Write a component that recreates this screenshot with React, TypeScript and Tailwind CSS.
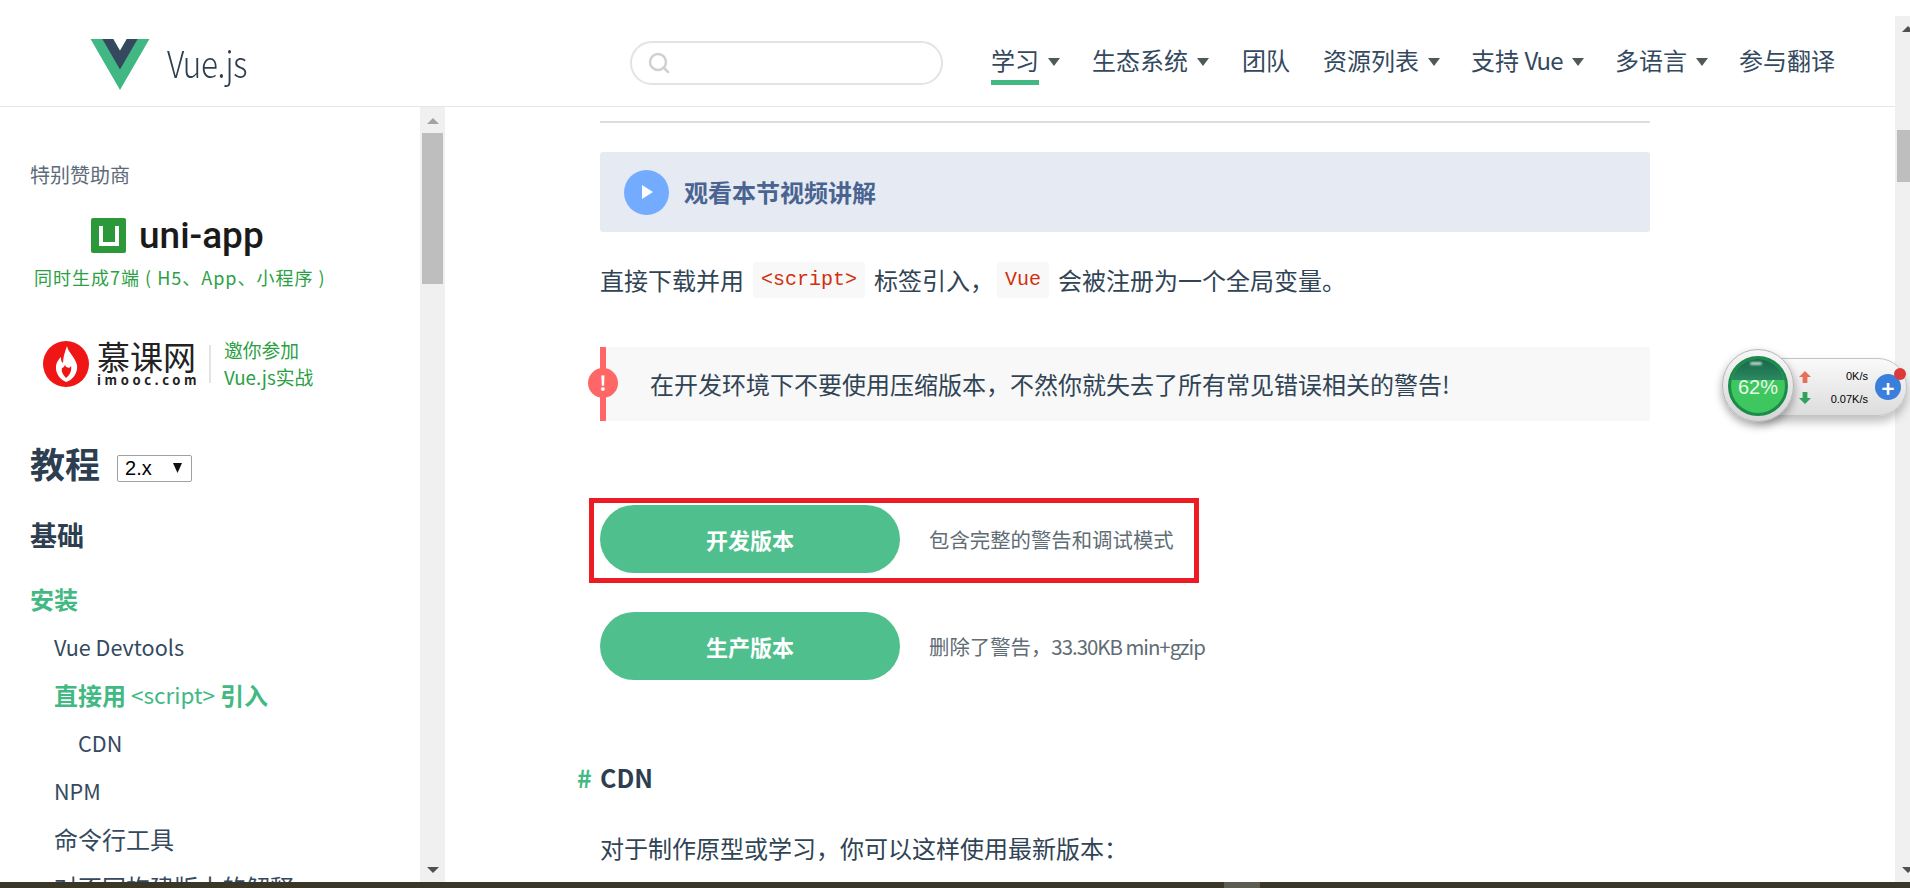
import type { ReactNode } from "react";
import { Search } from "lucide-react";

const Caret = () => (
  <svg width="12" height="8" viewBox="0 0 12 8" className="ml-[9px] mt-[3px]">
    <polygon points="0,0 12,0 6,8" fill="#4f5959" />
  </svg>
);

const NavItem = ({ label, caret, active, className }: { label: ReactNode; caret?: boolean; active?: boolean; className: string }) => (
  <div className={"relative flex items-center " + className}>
    <span>{label}</span>
    {caret && <Caret />}
    {active && <div className="absolute left-0 top-[38px] h-[5px] w-[48px] bg-[#42b983]" />}
  </div>
);

const VueLogo = () => (
  <svg width="60" height="51" viewBox="0 0 261.76 226.69" className="mt-[3px]">
    <path d="M161.096.001l-30.225 52.351L100.647.001H-.005l130.877 226.688L261.749.001z" fill="#41b883" />
    <path d="M161.096.001l-30.225 52.351L100.647.001H52.346l78.526 136.01L209.398.001z" fill="#34495e" />
  </svg>
);

const Header = () => (
  <header className="flex h-[107px] shrink-0 items-center border-b border-[#e6e6e6] bg-white pl-[90px] pt-[20px] text-[24px] text-[#34495e]">
    <div className="flex w-[540px] items-center">
      <VueLogo />
      <span className="mb-[2px] ml-[17px] origin-left scale-x-[0.85] text-[37px] font-light leading-none tracking-[-0.5px] text-[#2c3e50]">Vue.js</span>
    </div>
    <div className="flex h-[44px] w-[313px] items-center rounded-full border-2 border-[#e3e3e3] pl-[15px]">
      <Search size={24} color="#d0d0d0" strokeWidth={2.5} />
    </div>
    <nav className="mb-[6px] ml-[48px] flex h-[44px] items-center">
      <NavItem label="学习" caret active className="w-[101px]" />
      <NavItem label="生态系统" caret className="w-[150px]" />
      <NavItem label="团队" className="w-[81px]" />
      <NavItem label="资源列表" caret className="w-[148px]" />
      <NavItem
        label={
          <>
            支持 <span className="tracking-[-0.8px]">Vue</span>
          </>
        }
        caret
        className="w-[144px]"
      />
      <NavItem label="多语言" caret className="w-[124px]" />
      <NavItem label="参与翻译" className="w-[96px]" />
    </nav>
  </header>
);

const SideLink = ({ children, className }: { children: ReactNode; className?: string }) => (
  <div className={"flex h-[48px] shrink-0 items-center text-[21.6px] text-[#34495e] " + (className || "")}>{children}</div>
);

const ImoocLogo = () => (
  <div className="ml-[43px] mt-[50px] flex h-[48px] items-center">
    <svg width="46" height="46" viewBox="0 0 46 46" className="shrink-0">
      <circle cx="23" cy="23" r="23" fill="#f01616" />
      <path d="M24 5c1 6 8 11 10 19 1 8-4 15-11 17-5-2-11-8-10-16 1-5 3-7 5-9 0 3 0 4 2 6 0-6 2-11 4-17z" fill="#fff" />
      <path d="M22 24c1 3 5 4 6 1 1 4-1 9-5 12-3-3-5-7-4-10 1 0 2-1 3-3z" fill="#f01616" />
    </svg>
    <div className="ml-[8px] flex w-[100px] flex-col">
      <span className="text-[33px] leading-[30px] text-[#222]">慕课网</span>
      <span className="mt-[2px] text-[13px] font-bold leading-[14px] tracking-[3.6px] text-[#222]">imooc.com</span>
    </div>
    <div className="ml-[12px] h-[38px] w-[2px] bg-[#e4e4e4]" />
    <div className="mb-[2px] ml-[13px] flex flex-col text-[18.8px] leading-[27px] text-[#2c9f45]">
      <span>邀你参加</span>
      <span>Vue.js实战</span>
    </div>
  </div>
);

const Sidebar = () => (
  <aside className="flex w-[420px] shrink-0 flex-col overflow-hidden bg-white">
    <div className="ml-[30px] mt-[54px] h-[28px] text-[20px] leading-[28px] text-[#5d6b78]">特别赞助商</div>
    <div className="ml-[91px] mt-[29px] flex h-[35px] items-center">
      <div className="flex h-[35px] w-[35px] items-center justify-center rounded-[2px] bg-[#2b9939]">
        <div className="h-[20px] w-[20px] border-x-[4px] border-b-[4px] border-white" />
      </div>
      <span className="ml-[13px] font-['Roboto',sans-serif] text-[37px] font-medium leading-none text-[#1a1a1a]">uni-app</span>
    </div>
    <div className="ml-[34px] mt-[11px] h-[26px] text-[18px] leading-[26px] tracking-[1px] text-[#2c9f45]">同时生成7端 ( H5、App、小程序 )</div>
    <ImoocLogo />
    <div className="ml-[30px] mt-[51px] flex h-[48px] items-center">
      <span className="text-[35px] font-bold text-[#2c3e50]">教程</span>
      <div className="ml-[17px] mt-[10px] flex h-[27px] w-[75px] items-center rounded-[2px] border border-[#a0a0a0] pl-[7px] font-['Liberation_Sans',sans-serif] text-[20px] text-black">
        <span>2.x</span>
        <svg width="9" height="10" viewBox="0 0 9 10" className="ml-[21px]">
          <polygon points="0,0 9,0 4.5,10" fill="#111" />
        </svg>
      </div>
    </div>
    <div className="ml-[30px] mt-[24px] h-[48px] text-[27px] font-bold leading-[48px] text-[#2c3e50]">基础</div>
    <div className="ml-[30px] mt-[16px] h-[48px] text-[24px] font-bold leading-[48px] text-[#42b983]">安装</div>
    <div className="ml-[54px] flex flex-col">
      <SideLink>Vue Devtools</SideLink>
      <SideLink className="whitespace-pre">
        <b className="text-[24px] text-[#42b983]">直接用</b>
        <span className="text-[22.5px] text-[#42b983]"> &lt;script&gt; </span>
        <b className="text-[24px] text-[#42b983]">引入</b>
      </SideLink>
      <SideLink className="ml-[24px]">CDN</SideLink>
      <SideLink>NPM</SideLink>
      <SideLink>
        <span className="text-[24px]">命令行工具</span>
      </SideLink>
      <SideLink>
        <span className="text-[24px]">对不同构建版本的解释</span>
      </SideLink>
    </div>
  </aside>
);

const Scrollbar = () => (
  <div className="relative flex w-[25px] shrink-0 flex-col items-center bg-[#f0f0f0]">
    <svg width="12" height="6" viewBox="0 0 12 6" className="mt-[11px]">
      <polygon points="0,6 12,6 6,0" fill="#a3a3a3" />
    </svg>
    <div className="mt-[9px] h-[151px] w-[21px] bg-[#bebebe]" />
    <svg width="12" height="6" viewBox="0 0 12 6" className="mb-[9px] mt-auto">
      <polygon points="0,0 12,0 6,6" fill="#505050" />
    </svg>
  </div>
);

const Code = ({ children, className }: { children: ReactNode; className?: string }) => (
  <code className={"inline-flex h-[36px] items-center rounded-[3px] bg-[#f8f8f8] px-[8px] font-['Liberation_Mono',monospace] text-[20px] text-[#d1300f] " + (className || "")}>{children}</code>
);

const DownloadRow = ({ label, note, className }: { label: string; note: ReactNode; className?: string }) => (
  <div className={"relative flex h-[68px] items-center " + (className || "")}>
    <div className="flex h-[68px] w-[300px] items-center justify-center rounded-full bg-[#4fc08d] text-[22px] font-bold text-white">{label}</div>
    <span className="ml-[29px] text-[20.4px] text-[#5f6d75]">{note}</span>
  </div>
);

const Content = () => (
  <main className="relative min-w-0 flex-1 overflow-hidden bg-white pl-[155px] text-[24px] text-[#304455]">
    <div className="w-[1050px]">
      <div className="mt-[14px] h-[2px] bg-[#dddddd]" />
      <div className="mt-[29px] flex h-[80px] items-center rounded-[3px] bg-[#e6eaf2] pl-[24px]">
        <div className="flex h-[45px] w-[45px] items-center justify-center rounded-full bg-[#73abfe]">
          <svg width="11" height="14" viewBox="0 0 11 14" className="ml-[1px]">
            <polygon points="0,0 11,7 0,14" fill="#fff" />
          </svg>
        </div>
        <span className="ml-[15px] text-[24px] font-bold text-[#4a6491]">观看本节视频讲解</span>
      </div>
      <div className="mt-[30px] flex h-[36px] items-center">
        直接下载并用
        <Code className="mx-[9px]">&lt;script&gt;</Code>
        标签引入，
        <Code className="ml-[3px] mr-[9px]">Vue</Code>
        会被注册为一个全局变量。
      </div>
      <div className="relative mt-[49px] flex h-[74px] items-center border-l-[6px] border-[#ff6666] bg-[#f8f8f8] pl-[44px]">
        <div className="absolute left-[-18px] top-[21px] flex h-[30px] w-[30px] items-center justify-center rounded-full bg-[#ff6666] text-[20px] font-bold text-white">!</div>
        在开发环境下不要使用压缩版本，不然你就失去了所有常见错误相关的警告!
      </div>
      <DownloadRow label="开发版本" note="包含完整的警告和调试模式" className="mt-[84px]" />
      <div className="pointer-events-none absolute left-[144px] top-[391px] h-[85px] w-[610px] border-[5px] border-[#ed1c24]" />
      <DownloadRow
        label="生产版本"
        note={
          <>
            删除了警告，<span className="tracking-[-1px]">33.30KB min+gzip</span>
          </>
        }
        className="mt-[39px]"
      />
      <div className="relative mt-[78px] flex h-[40px] items-center text-[25px] font-semibold text-[#2c3e50]">
        <span className="absolute left-[-23px] font-bold text-[#42b983]">#</span>
        CDN
      </div>
      <div className="mt-[30px] flex h-[40px] items-center">对于制作原型或学习，你可以这样使用最新版本：</div>
    </div>
  </main>
);

const SpeedWidget = () => (
  <div className="absolute left-[1722px] top-[349px] h-[73px] w-[185px]">
    <div className="absolute left-[36px] top-[9px] h-[58px] w-[149px] rounded-r-full border border-[#c4c4c4] bg-gradient-to-b from-[#fafafa] to-[#dcdcdc] shadow-[0_6px_10px_rgba(0,0,0,0.25)]">
      <svg width="12" height="12" viewBox="0 0 10 10" className="absolute left-[40px] top-[12px]">
        <polygon points="5,0 10,5 7,5 7,10 3,10 3,5 0,5" fill="#e8705a" />
      </svg>
      <svg width="12" height="12" viewBox="0 0 10 10" className="absolute left-[40px] top-[33px]">
        <polygon points="5,10 10,5 7,5 7,0 3,0 3,5 0,5" fill="#2fa35a" />
      </svg>
      <div className="absolute right-[38px] top-[10px] font-['Liberation_Sans',sans-serif] text-[11px] leading-[14px] text-black">0K/s</div>
      <div className="absolute right-[38px] top-[33px] font-['Liberation_Sans',sans-serif] text-[11px] leading-[14px] text-black">0.07K/s</div>
      <div className="absolute right-[5px] top-[15px] flex h-[26px] w-[26px] items-center justify-center rounded-full bg-[#3a7fdc] text-[22px] font-bold leading-none text-white">+</div>
      <div className="absolute right-[0px] top-[9px] h-[12px] w-[12px] rounded-full bg-[#d93a3a]" />
    </div>
    <div className="absolute left-0 top-0 flex h-[73px] w-[72px] items-center justify-center rounded-full border border-[#b5b5b5] bg-gradient-to-b from-[#f7f7f7] to-[#d5d5d5] shadow-[0_4px_8px_rgba(0,0,0,0.35)]">
      <div className="relative h-[60px] w-[60px] overflow-hidden rounded-full border-[3px] border-[#1b8a4a] bg-[#3ec65f]">
        <div className="relative h-[21px] bg-gradient-to-b from-[#17664a] to-[#2b8a60]">
          <div className="absolute left-[19px] top-[3px] h-[3px] w-[12px] rounded-full bg-[#b9dcc8] blur-[1px]" />
        </div>
        <div className="absolute inset-x-0 top-[13px] text-center font-['Liberation_Sans',sans-serif] text-[20px] text-[#e9f7ea]">62%</div>
      </div>
    </div>
  </div>
);

export default function App() {
  return (
    <div className="relative flex h-[888px] w-[1910px] flex-col overflow-hidden bg-white font-['Noto_Sans_CJK_SC',sans-serif]">
      <Header />
      <div className="flex min-h-0 flex-1">
        <Sidebar />
        <Scrollbar />
        <Content />
      </div>
      <div className="flex h-[6px] shrink-0 bg-[#3a3728]">
        <div className="ml-[1224px] w-[36px] bg-[#5c5c50]" />
      </div>
      <div className="absolute right-0 top-[16px] flex h-[866px] w-[15px] flex-col items-start overflow-hidden bg-[#f0f0f0] pl-[2px]">
        <svg width="12" height="6" viewBox="0 0 12 6" className="ml-[5px] mt-[10px]">
          <polygon points="0,6 12,6 6,0" fill="#505050" />
        </svg>
        <div className="mt-[98px] h-[52px] w-[14px] shrink-0 bg-[#bebebe]" />
        <svg width="12" height="6" viewBox="0 0 12 6" className="mb-[9px] ml-[5px] mt-auto">
          <polygon points="0,0 12,0 6,6" fill="#505050" />
        </svg>
      </div>
      <SpeedWidget />
    </div>
  );
}
